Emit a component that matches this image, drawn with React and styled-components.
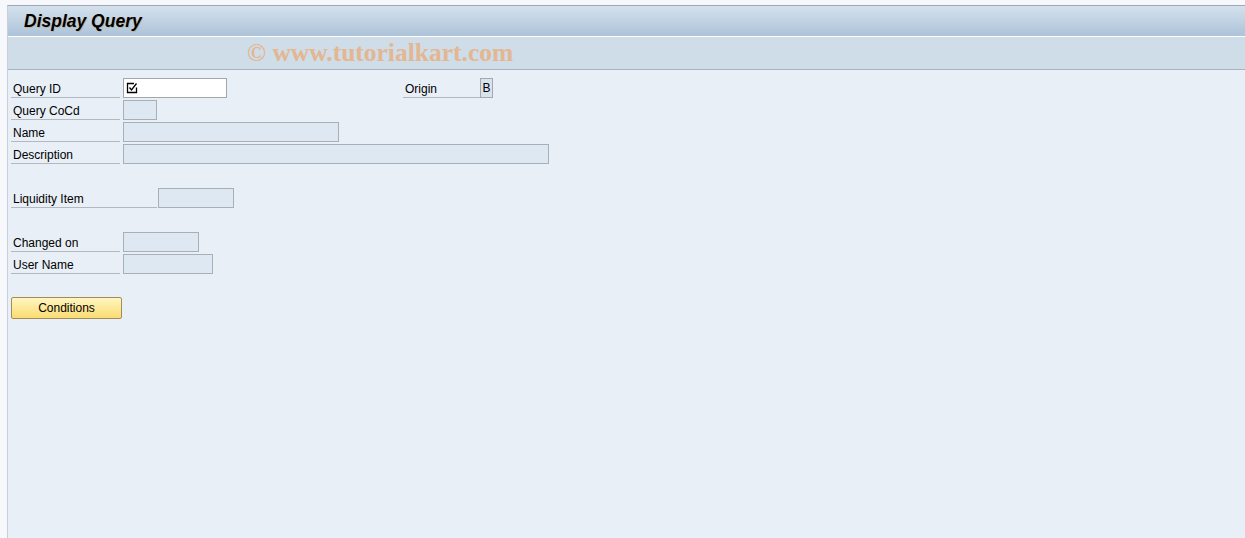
import React from "react";
import styled, { createGlobalStyle } from "styled-components";

const Global = createGlobalStyle`
  html, body { margin: 0; padding: 0; background: #f7f8fb; }
  body { font-family: Tahoma, "Liberation Sans", "DejaVu Sans", sans-serif; }
`;

const Frame = styled.div`
  margin: 5px 0 0 7px;
  height: 533px;
  display: flex;
  flex-direction: column;
  border-left: 1px solid #c6d0dc;
  border-top: 1px solid #9fa9b5;
  background: #e8eff6;
  box-sizing: border-box;
`;

const TitleBar = styled.div`
  height: 30px;
  display: flex;
  align-items: center;
  padding-left: 16px;
  background: linear-gradient(#d4e1ed, #adc3d9);
  border-bottom: 1px solid #ffffff;
`;

const Title = styled.h1`
  margin: 0;
  font: italic bold 17.5px "Liberation Sans", Arial, sans-serif;
  color: #000;
  text-shadow: 1px 1px 0 rgba(200, 130, 40, 0.35);
`;

const Toolbar = styled.div`
  height: 32px;
  display: flex;
  align-items: center;
  padding-left: 239px;
  background: #cfdde8;
  border-bottom: 1px solid #a7b3bf;
`;

const Watermark = styled.span`
  font: bold 25.5px "Liberation Serif", "Times New Roman", serif;
  color: #e8b083;
  opacity: 0.85;
`;

const Form = styled.div`
  display: flex;
  flex-direction: column;
  padding: 7px 0 0 3px;
`;

const Row = styled.div`
  height: 22px;
  display: flex;
  align-items: center;
`;

const Spacer = styled.div`
  height: 22px;
`;

const Label = styled.div`
  width: ${(p) => p.$w || 109}px;
  height: 20px;
  margin-right: ${(p) => p.$gap ?? 3}px;
  margin-left: ${(p) => p.$ml || 0}px;
  box-sizing: border-box;
  padding: 4px 0 0 2px;
  border-bottom: 1px solid #b3b9bf;
  font-size: 12px;
  line-height: 14px;
  color: #000;
  white-space: nowrap;
`;

const Field = styled.div`
  width: ${(p) => p.$w}px;
  height: 20px;
  box-sizing: border-box;
  border: 1px solid ${(p) => (p.$editable ? "#a3a7ab" : "#a9afb5")};
  background: ${(p) => (p.$editable ? "#ffffff" : "#dde8f3")};
  display: flex;
  align-items: center;
  padding-left: 2px;
  font-size: 12px;
  color: #000;
`;

const CharBox = styled(Field)`
  justify-content: center;
  padding: 0;
  background: #d9e3ec;
  border-color: #a0a8b0;
`;

const ButtonRow = styled.div`
  padding: 22px 0 0 0;
`;

const Button = styled.button`
  width: 111px;
  height: 22px;
  border: 1px solid #a08c5a;
  border-radius: 2px;
  background: linear-gradient(#fff6c0, #fbdc73);
  font: 12px Tahoma, "Liberation Sans", sans-serif;
  color: #000;
  padding: 0;
  cursor: pointer;
`;

const CheckIcon = () => (
  <svg width="12" height="12" viewBox="0 0 12 12" fill="none" stroke="#000" strokeWidth="1.3">
    <path d="M8 1.5H1.5V10.5H10.5V5.5" />
    <path d="M3.5 5.5L5.5 8L10.5 1.5" />
  </svg>
);

export default function App() {
  return (
    <>
      <Global />
      <Frame>
        <TitleBar>
          <Title>Display Query</Title>
        </TitleBar>
        <Toolbar>
          <Watermark>© www.tutorialkart.com</Watermark>
        </Toolbar>
        <Form>
          <Row>
            <Label>Query ID</Label>
            <Field $w={104} $editable>
              <CheckIcon />
            </Field>
            <Label $ml={176} $w={77} $gap={0}>Origin</Label>
            <CharBox $w={13}>B</CharBox>
          </Row>
          <Row>
            <Label>Query CoCd</Label>
            <Field $w={34} />
          </Row>
          <Row>
            <Label>Name</Label>
            <Field $w={216} />
          </Row>
          <Row>
            <Label>Description</Label>
            <Field $w={426} />
          </Row>
          <Spacer />
          <Row>
            <Label $w={146} $gap={1}>Liquidity Item</Label>
            <Field $w={76} />
          </Row>
          <Spacer />
          <Row>
            <Label>Changed on</Label>
            <Field $w={76} />
          </Row>
          <Row>
            <Label>User Name</Label>
            <Field $w={90} />
          </Row>
          <ButtonRow>
            <Button>Conditions</Button>
          </ButtonRow>
        </Form>
      </Frame>
    </>
  );
}
